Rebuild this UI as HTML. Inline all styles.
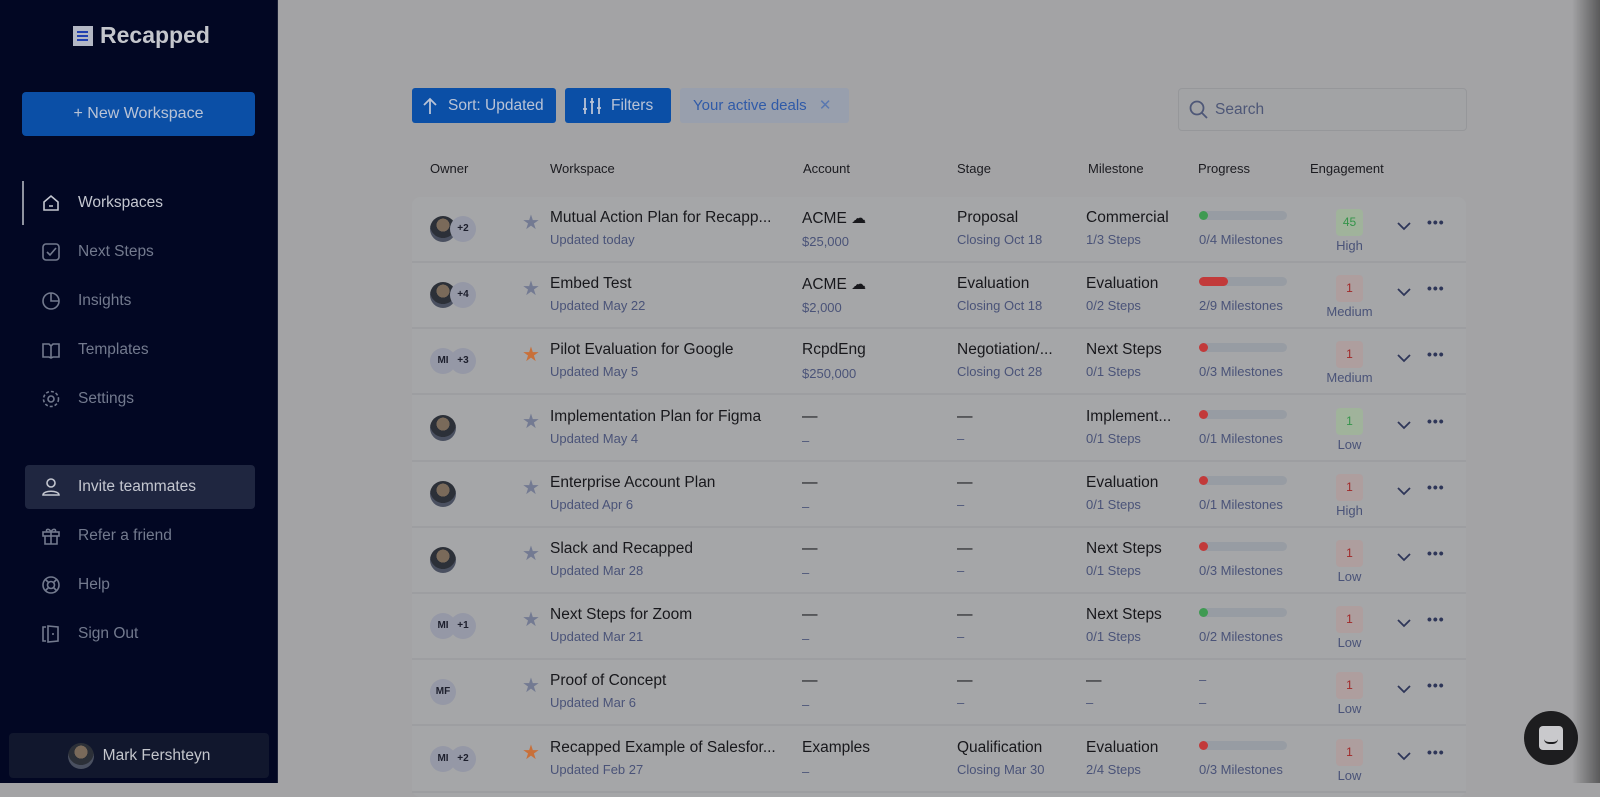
<!DOCTYPE html>
<html><head><meta charset="utf-8"><style>
*{box-sizing:border-box;margin:0;padding:0}
body{width:1600px;height:783px;overflow:hidden;background:#a3a3a5;font-family:"Liberation Sans",sans-serif;position:relative}
.sb{position:absolute;left:0;top:0;width:278px;height:783px;background:#020723;border-right:1px solid #1a1f36}
.logo{position:absolute;top:22px;left:73px;display:flex;align-items:center;color:#c4c6cc;font-size:23px;font-weight:bold}
.logo i{display:inline-block;width:20px;height:20px;background:#b3b7c4;margin-right:7px;position:relative}
.logo i:before{content:"";position:absolute;left:4px;top:5px;width:11px;height:2px;background:#2240b0;box-shadow:0 4px 0 #2240b0,0 8px 0 #2240b0}
.nw{position:absolute;left:22px;top:92px;width:233px;height:44px;background:#0b4fa6;border-radius:4px;color:#b9c3d6;font-size:16px;text-align:center;line-height:44px}
.nav{position:absolute;left:78px;font-size:15.5px;color:#737a8e}
.nav.a{color:#c4c7d0}
.ic{position:absolute;left:41px;width:20px;height:20px}
.inv{position:absolute;left:25px;top:465px;width:230px;height:44px;background:#1f2640;border-radius:4px}
.user{position:absolute;left:9px;top:733px;width:260px;height:45px;background:#11172d;border-radius:4px;color:#c4c6cc;font-size:15.5px;display:flex;align-items:center;justify-content:center}
.av{width:26px;height:26px;border-radius:50%;background:radial-gradient(circle at 50% 35%,#7a6a5a 0 30%,#2c3038 31% 60%,#4a5060 61%);display:inline-block}
.btn{position:absolute;top:88px;height:35px;background:#0b4fa6;border-radius:3px;color:#b9c3d6;font-size:15.5px;display:flex;align-items:center}
.chip{position:absolute;left:680px;top:88px;width:169px;height:35px;background:#989fad;border-radius:3px;color:#2f5aa8;font-size:15px;line-height:35px;padding-left:13px}
.search{position:absolute;left:1178px;top:88px;width:289px;height:43px;border:1px solid #96979a;border-radius:4px;background:#a2a3a5;color:#4e5777;font-size:15.5px;line-height:41px;padding-left:36px}
.h{position:absolute;top:161px;font-size:13px;color:#1b1b20}
.card{position:absolute;left:412px;top:197px;width:1054px;height:600px;background:#a5a6a8;border-radius:8px}
.row{position:absolute;left:412px;width:1054px;height:66px;border-bottom:2px solid #9d9ea1}
.row div{position:absolute}
.t{font-size:15.5px;color:#18181c;white-space:nowrap}
.s{font-size:13px;color:#4a5378;white-space:nowrap}
.ava{left:18px;top:19px;width:26px;height:26px;border-radius:50%;background:radial-gradient(circle at 50% 35%,#7a6a5a 0 30%,#2c3038 31% 60%,#4a5060 61%)}
.ini{left:18px;top:19px;width:26px;height:26px;border-radius:50%;background:#9598a6;font-size:10px;color:#1c1e2c;text-align:center;line-height:26px;font-weight:bold}
.pl{left:38px;top:19px;width:26px;height:26px;border-radius:50%;background:#9598a6;font-size:10px;color:#1c1e2c;text-align:center;line-height:26px;font-weight:bold}
.bar{left:787px;top:14px;width:88px;height:9px;border-radius:5px;background:#979ca3}
.eng{left:924px;top:12px;width:27px;height:27px;border-radius:4px;font-size:12px;text-align:center;line-height:27px}
</style></head><body>
<div class="sb">
<div class="logo"><i></i>Recapped</div>
<div class="nw">+ New Workspace</div>
<div style="position:absolute;left:22px;top:181px;width:2px;height:44px;background:#8f93a0"></div>
<svg class="ic" style="top:193px" viewBox="0 0 20 20" fill="none" stroke="#c4c7d0" stroke-width="1.6"><path d="M3 17V9l7-6 7 6v8zM8 13h4"/></svg>
<div class="nav a" style="top:194px">Workspaces</div>
<svg class="ic" style="top:242px" viewBox="0 0 20 20" fill="none" stroke="#737a8e" stroke-width="1.6"><rect x="2" y="2" width="16" height="16" rx="3"/><path d="M6 10l3 3 6-7"/></svg>
<div class="nav" style="top:243px">Next Steps</div>
<svg class="ic" style="top:291px" viewBox="0 0 20 20" fill="none" stroke="#737a8e" stroke-width="1.6"><circle cx="10" cy="10" r="8"/><path d="M10 2v8h8"/></svg>
<div class="nav" style="top:292px">Insights</div>
<svg class="ic" style="top:340px" viewBox="0 0 20 20" fill="none" stroke="#737a8e" stroke-width="1.6"><path d="M2 4h6l2 2 2-2h6v13h-6l-2 1-2-1H2zM10 6v12"/></svg>
<div class="nav" style="top:341px">Templates</div>
<svg class="ic" style="top:389px" viewBox="0 0 20 20" fill="none" stroke="#737a8e" stroke-width="1.6"><circle cx="10" cy="10" r="3"/><circle cx="10" cy="10" r="7.5" stroke-dasharray="3 2"/></svg>
<div class="nav" style="top:390px">Settings</div>
<div class="inv"></div>
<svg class="ic" style="top:477px" viewBox="0 0 20 20" fill="none" stroke="#c4c7d0" stroke-width="1.6"><circle cx="10" cy="6" r="4"/><path d="M2 18c0-5 16-5 16 0z"/></svg>
<div class="nav a" style="top:478px">Invite teammates</div>
<svg class="ic" style="top:526px" viewBox="0 0 20 20" fill="none" stroke="#737a8e" stroke-width="1.6"><rect x="2" y="6" width="16" height="4"/><path d="M4 10v8h12v-8M10 6v12M10 6c-2-4-6-3-4 0M10 6c2-4 6-3 4 0"/></svg>
<div class="nav" style="top:527px">Refer a friend</div>
<svg class="ic" style="top:575px" viewBox="0 0 20 20" fill="none" stroke="#737a8e" stroke-width="1.6"><circle cx="10" cy="10" r="8"/><circle cx="10" cy="10" r="3.5"/><path d="M4 4l3.5 3.5M16 4l-3.5 3.5M4 16l3.5-3.5M16 16l-3.5-3.5"/></svg>
<div class="nav" style="top:576px">Help</div>
<svg class="ic" style="top:624px" viewBox="0 0 20 20" fill="none" stroke="#737a8e" stroke-width="1.6"><path d="M5 3H2v14h3M7 2l10 1v14l-10 1zM12 9v2"/></svg>
<div class="nav" style="top:625px">Sign Out</div>
<div class="user"><span class="av" style="margin-right:9px"></span>Mark Fershteyn</div>
</div>

<div class="btn" style="left:412px;width:144px"><svg width="16" height="18" viewBox="0 0 16 18" style="margin:0 10px 0 10px" fill="none" stroke="#b9c3d6" stroke-width="1.8"><path d="M8 17V2M2 8l6-6 6 6"/></svg>Sort: Updated</div>
<div class="btn" style="left:565px;width:106px"><svg width="20" height="18" viewBox="0 0 20 18" style="margin:0 9px 0 17px" fill="none" stroke="#b9c3d6" stroke-width="1.8"><path d="M3 1v16M10 1v16M17 1v16M1 12h4M8 5h4M15 11h4"/></svg>Filters</div>
<div class="chip">Your active deals <span style="color:#5a78b0;margin-left:8px">✕</span></div>
<div class="search"><svg style="position:absolute;left:10px;top:11px" width="20" height="20" viewBox="0 0 20 20" fill="none" stroke="#4e5777" stroke-width="1.8"><circle cx="8" cy="8" r="6.5"/><path d="M13 13l5 5"/></svg>Search</div>

<div class="h" style="left:430px">Owner</div>
<div class="h" style="left:550px">Workspace</div>
<div class="h" style="left:803px">Account</div>
<div class="h" style="left:957px">Stage</div>
<div class="h" style="left:1088px">Milestone</div>
<div class="h" style="left:1198px">Progress</div>
<div class="h" style="left:1310px">Engagement</div>

<div class="card"></div>
<div id="rows"></div>

<div style="position:absolute;left:1524px;top:711px;width:54px;height:54px;border-radius:50%;background:#1d1d1f"><div style="position:absolute;left:15px;top:15px;width:24px;height:24px;background:#c9c9cc;border-radius:4px 4px 0 4px"></div><div style="position:absolute;left:20px;top:28px;width:14px;height:5px;border-bottom:2px solid #1d1d1f;border-radius:0 0 8px 8px"></div></div>
<div style="position:absolute;left:1572px;top:0;width:28px;height:783px;background:linear-gradient(90deg,rgba(0,0,0,0),rgba(0,0,0,.45))"></div>

<script>
var R=[
["a","+2","#737a92","Mutual Action Plan for Recapp...","Updated today","ACME",1,"$25,000","Proposal","Closing Oct 18","Commercial","1/3 Steps",["g",0],"0/4 Milestones","45","g","High"],
["a","+4","#737a92","Embed Test","Updated May 22","ACME",1,"$2,000","Evaluation","Closing Oct 18","Evaluation","0/2 Steps",["r",20],"2/9 Milestones","1","r","Medium"],
["MI","+3","#c8703a","Pilot Evaluation for Google","Updated May 5","RcpdEng",0,"$250,000","Negotiation/...","Closing Oct 28","Next Steps","0/1 Steps",["r",0],"0/3 Milestones","1","r","Medium"],
["a","","#737a92","Implementation Plan for Figma","Updated May 4","—",0,"–","—","–","Implement...","0/1 Steps",["r",0],"0/1 Milestones","1","g","Low"],
["a","","#737a92","Enterprise Account Plan","Updated Apr 6","—",0,"–","—","–","Evaluation","0/1 Steps",["r",0],"0/1 Milestones","1","r","High"],
["a","","#737a92","Slack and Recapped","Updated Mar 28","—",0,"–","—","–","Next Steps","0/1 Steps",["r",0],"0/3 Milestones","1","r","Low"],
["MI","+1","#737a92","Next Steps for Zoom","Updated Mar 21","—",0,"–","—","–","Next Steps","0/1 Steps",["g",0],"0/2 Milestones","1","r","Low"],
["MF","","#737a92","Proof of Concept","Updated Mar 6","—",0,"–","—","–","—","–",null,"–","1","r","Low"],
["MI","+2","#c8703a","Recapped Example of Salesfor...","Updated Feb 27","Examples",0,"–","Qualification","Closing Mar 30","Evaluation","2/4 Steps",["r",0],"0/3 Milestones","1","r","Low"]];
var h="";
R.forEach(function(r,i){
var y=197+i*66.2;
h+='<div class="row" style="top:'+y+'px">';
h+=r[0]=="a"?'<div class="ava"></div>':'<div class="ini">'+r[0]+'</div>';
if(r[1])h+='<div class="pl">'+r[1]+'</div>';
h+='<div style="left:110px;top:13px;font-size:20px;color:'+r[2]+'">★</div>';
h+='<div class="t" style="left:138px;top:12px">'+r[3]+'</div><div class="s" style="left:138px;top:35px">'+r[4]+'</div>';
h+='<div class="t" style="left:390px;top:12px">'+r[5]+(r[6]?' <span style="font-size:15px">☁</span>':'')+'</div><div class="s" style="left:390px;top:37px">'+r[7]+'</div>';
h+='<div class="t" style="left:545px;top:12px">'+r[8]+'</div><div class="s" style="left:545px;top:35px">'+r[9]+'</div>';
h+='<div class="t" style="left:674px;top:12px">'+r[10]+'</div><div class="s" style="left:674px;top:35px">'+r[11]+'</div>';
if(r[12]){var c=r[12][0]=="g"?"#3f9a52":"#c23a3a";h+='<div class="bar"></div><div style="left:787px;top:14px;height:9px;border-radius:5px;width:'+(9+r[12][1])+'px;background:'+c+'"></div>';}
else h+='<div class="s" style="left:787px;top:12px">–</div>';
h+='<div class="s" style="left:787px;top:35px">'+r[13]+'</div>';
var g=r[15]=="g";
h+='<div class="eng" style="background:'+(g?'#a0b39b':'#ae9e9e')+';color:'+(g?'#34944a':'#a02828')+'">'+r[14]+'</div>';
h+='<div class="s" style="left:900px;width:75px;text-align:center;top:41px">'+r[16]+'</div>';
h+='<svg style="position:absolute;left:985px;top:24px" width="14" height="10" viewBox="0 0 14 10" fill="none" stroke="#2e3658" stroke-width="1.8"><path d="M1 2l6 6 6-6"/></svg>';
h+='<div style="left:1015px;top:17px;font-size:14px;color:#2e3658;font-weight:bold;letter-spacing:1px">•••</div>';
h+='</div>';});
document.getElementById("rows").innerHTML=h;
</script>
</body></html>
